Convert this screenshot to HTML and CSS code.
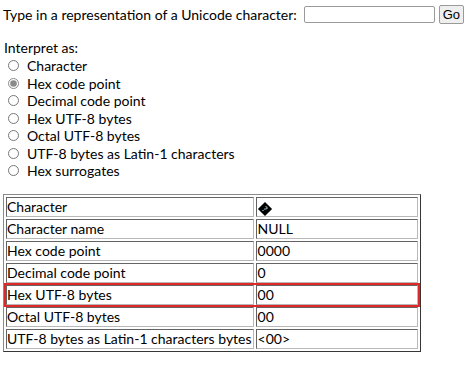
FILE: index.html
```html
<!DOCTYPE html>
<html>
<head>
    <title>Unicode character lookup</title>
    <link rel="stylesheet" href="styles.css">
</head>
<body>
    <form class="lookup-form">
        <div class="entry-line">
            <label for="char-input">Type in a representation of a Unicode character:</label>
            <input type="text" id="char-input" class="char-input">
            <button type="button" class="go-button">Go</button>
        </div>

        <p class="interpret-title">Interpret as:</p>
        <div class="choice"><input type="radio" name="mode" id="m-char"><label for="m-char">Character</label></div>
        <div class="choice"><input type="radio" name="mode" id="m-hex" checked><label for="m-hex">Hex code point</label></div>
        <div class="choice"><input type="radio" name="mode" id="m-dec"><label for="m-dec">Decimal code point</label></div>
        <div class="choice"><input type="radio" name="mode" id="m-utf8"><label for="m-utf8">Hex UTF-8 bytes</label></div>
        <div class="choice"><input type="radio" name="mode" id="m-oct"><label for="m-oct">Octal UTF-8 bytes</label></div>
        <div class="choice"><input type="radio" name="mode" id="m-latin"><label for="m-latin">UTF-8 bytes as Latin-1 characters</label></div>
        <div class="choice"><input type="radio" name="mode" id="m-surr"><label for="m-surr">Hex surrogates</label></div>
    </form>

    <table class="result-table" border="1">
        <tr><td>Character</td><td class="value-cell"><span class="bad-char">?</span></td></tr>
        <tr><td>Character name</td><td>NULL</td></tr>
        <tr><td>Hex code point</td><td>0000</td></tr>
        <tr><td>Decimal code point</td><td>0</td></tr>
        <tr class="marked"><td>Hex UTF-8 bytes</td><td>00</td></tr>
        <tr><td>Octal UTF-8 bytes</td><td>00</td></tr>
        <tr><td>UTF-8 bytes as Latin-1 characters bytes</td><td>&lt;00&gt;</td></tr>
    </table>
</body>
</html>
```

FILE: styles.css
```css
body {
    margin: 0;
    padding: 4px 3px;
    background-color: #ffffff;
    color: #000000;
    font-family: Lato, "Noto Sans", sans-serif;
    font-size: 14px;
}

.lookup-form {
    margin: 0;
}

.entry-line {
    display: flex;
    align-items: center;
    height: 20px;
    white-space: nowrap;
}

.char-input {
    box-sizing: border-box;
    width: 131px;
    height: 17px;
    margin: 0 4px 0 7px;
    padding: 0 1px;
    border: 1px solid #9a9a9a;
    border-radius: 2px;
}

.go-button {
    box-sizing: border-box;
    height: 19px;
    width: 25px;
    padding: 0;
    font-family: "Liberation Sans", sans-serif;
    font-size: 13px;
    background-color: #efefef;
    border: 1px solid #9a9a9a;
    border-radius: 2px;
}

.interpret-title {
    margin: 14px 0 0 1px;
    line-height: 19px;
}

.choice {
    display: flex;
    align-items: center;
    height: 17.5px;
    padding-left: 5px;
    white-space: nowrap;
}

.choice input {
    width: 11px;
    height: 11px;
    margin: 0 8px 0 0;
    accent-color: #8a8a8a;
}

.result-table {
    margin-top: 14px;
    border-spacing: 2px;
    border-color: #8a8a8a;
}

.result-table td {
    padding: 0 1px 0 0;
    height: 18px;
    line-height: 18px;
    white-space: nowrap;
    border-color: #b8b8b8;
}

.result-table td + td {
    width: 158px;
    padding-left: 1px;
}

.bad-char {
    display: inline-block;
    width: 10px;
    height: 10px;
    background-color: #000;
    color: #fff;
    font-size: 8px;
    line-height: 10px;
    text-align: center;
    transform: rotate(45deg);
    margin-left: 2px;
}

.marked {
    outline: 2px solid #e02828;
    outline-offset: 0;
}
```
